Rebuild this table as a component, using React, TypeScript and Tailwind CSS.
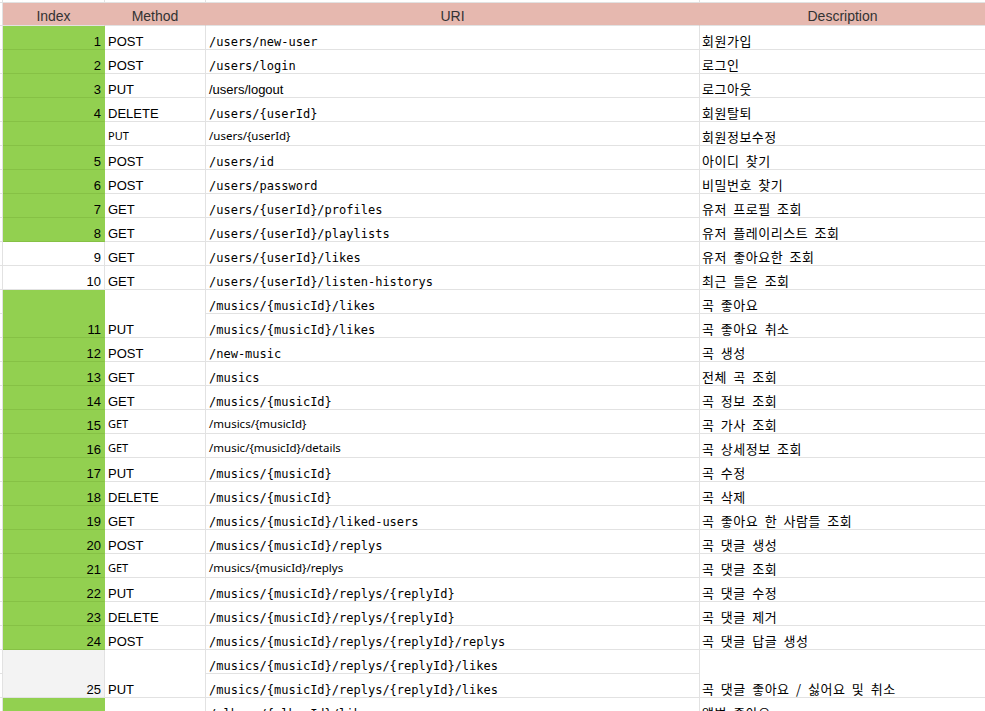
import React from "react";

type Fill = "g" | "w" | "s";
type UF = "mono" | "arial" | "small";
type R = {
  i?: string;
  m?: string;
  ms?: boolean;
  u: string;
  uf?: UF;
  d?: string;
  f: Fill;
  spanIdx?: boolean;
  spanMethod?: boolean;
  spanDesc?: boolean;
  skipIdx?: boolean;
  skipMethod?: boolean;
  skipDesc?: boolean;
};

const rows: R[] = [
  { i: "1", m: "POST", u: "/users/new-user", d: "회원가입", f: "g" },
  { i: "2", m: "POST", u: "/users/login", d: "로그인", f: "g" },
  { i: "3", m: "PUT", u: "/users/logout", uf: "arial", d: "로그아웃", f: "g" },
  { i: "4", m: "DELETE", u: "/users/{userId}", d: "회원탈퇴", f: "g" },
  { m: "PUT", ms: true, u: "/users/{userId}", uf: "small", d: "회원정보수정", f: "g" },
  { i: "5", m: "POST", u: "/users/id", d: "아이디 찾기", f: "g" },
  { i: "6", m: "POST", u: "/users/password", d: "비밀번호 찾기", f: "g" },
  { i: "7", m: "GET", u: "/users/{userId}/profiles", d: "유저 프로필 조회", f: "g" },
  { i: "8", m: "GET", u: "/users/{userId}/playlists", d: "유저 플레이리스트 조회", f: "g" },
  { i: "9", m: "GET", u: "/users/{userId}/likes", d: "유저 좋아요한 조회", f: "w" },
  { i: "10", m: "GET", u: "/users/{userId}/listen-historys", d: "최근 들은 조회", f: "w" },
  { i: "11", m: "PUT", u: "/musics/{musicId}/likes", d: "곡 좋아요", f: "g", spanIdx: true, spanMethod: true },
  { u: "/musics/{musicId}/likes", d: "곡 좋아요 취소", f: "g", skipIdx: true, skipMethod: true },
  { i: "12", m: "POST", u: "/new-music", d: "곡 생성", f: "g" },
  { i: "13", m: "GET", u: "/musics", d: "전체 곡 조회", f: "g" },
  { i: "14", m: "GET", u: "/musics/{musicId}", d: "곡 정보 조회", f: "g" },
  { i: "15", m: "GET", ms: true, u: "/musics/{musicId}", uf: "small", d: "곡 가사 조회", f: "g" },
  { i: "16", m: "GET", ms: true, u: "/music/{musicId}/details", uf: "small", d: "곡 상세정보 조회", f: "g" },
  { i: "17", m: "PUT", u: "/musics/{musicId}", d: "곡 수정", f: "g" },
  { i: "18", m: "DELETE", u: "/musics/{musicId}", d: "곡 삭제", f: "g" },
  { i: "19", m: "GET", u: "/musics/{musicId}/liked-users", d: "곡 좋아요 한 사람들 조회", f: "g" },
  { i: "20", m: "POST", u: "/musics/{musicId}/replys", d: "곡 댓글 생성", f: "g" },
  { i: "21", m: "GET", ms: true, u: "/musics/{musicId}/replys", uf: "small", d: "곡 댓글 조회", f: "g" },
  { i: "22", m: "PUT", u: "/musics/{musicId}/replys/{replyId}", d: "곡 댓글 수정", f: "g" },
  { i: "23", m: "DELETE", u: "/musics/{musicId}/replys/{replyId}", d: "곡 댓글 제거", f: "g" },
  { i: "24", m: "POST", u: "/musics/{musicId}/replys/{replyId}/replys", d: "곡 댓글 답글 생성", f: "g" },
  {
    i: "25",
    m: "PUT",
    u: "/musics/{musicId}/replys/{replyId}/likes",
    d: "곡 댓글 좋아요 / 싫어요 및 취소",
    f: "s",
    spanIdx: true,
    spanMethod: true,
    spanDesc: true,
  },
  { u: "/musics/{musicId}/replys/{replyId}/likes", f: "s", skipIdx: true, skipMethod: true, skipDesc: true },
  { u: "/albums/{albumId}/likes", d: "앨범 좋아요", f: "g" },
  { u: "", d: "", f: "g" },
];

const ARIAL = "font-['Liberation_Sans',Arial,sans-serif] text-[13px]";
const MONO = "font-['DejaVu_Sans_Mono',monospace] text-[12px]";
const SMALL = "font-['Noto_Sans',sans-serif] text-[11px]";
const SMALLU = "font-['Noto_Sans',sans-serif] text-[11.5px]";
const KR = "font-['Noto_Sans_CJK_KR',sans-serif] text-[13px] tracking-[0.5px] [word-spacing:3px]";

const base = "flex items-end leading-[14px] whitespace-nowrap overflow-hidden border-b border-r box-border";
const grid = "border-[#e2e2e2] bg-white";

function idxFill(f: Fill) {
  if (f === "g") return "bg-[#92d050] border-b-[#86c145] border-r-[#92d050]";
  if (f === "s") return "bg-[#f3f3f3] border-b-[#e2e2e2] border-r-[#e2e2e2]";
  return "bg-white border-[#e2e2e2]";
}

export default function App() {
  const cells: React.ReactNode[] = [];
  rows.forEach((r, k) => {
    cells.push(<div key={`s${k}`} className={`col-start-1 ${base} ${grid}`} />);
    if (!r.skipIdx) {
      cells.push(
        <div
          key={`i${k}`}
          className={`col-start-2 ${r.spanIdx ? "row-span-2" : ""} ${base} ${idxFill(r.f)} justify-end pr-[3px] ${ARIAL} text-black`}
        >
          {r.i}
        </div>
      );
    }
    if (!r.skipMethod) {
      cells.push(
        <div
          key={`m${k}`}
          className={`col-start-3 ${r.spanMethod ? "row-span-2" : ""} ${base} ${grid} pl-[3px] ${r.ms ? SMALL + " pb-[2px]" : ARIAL} text-black`}
        >
          {r.m}
        </div>
      );
    }
    const uf = r.uf === "arial" ? ARIAL : r.uf === "small" ? SMALLU + " pb-[2px]" : MONO;
    cells.push(
      <div key={`u${k}`} className={`col-start-4 ${base} ${grid} pl-[3px] ${uf} text-black`}>
        {r.u}
      </div>
    );
    if (!r.skipDesc) {
      cells.push(
        <div
          key={`d${k}`}
          className={`col-start-5 ${r.spanDesc ? "row-span-2" : ""} ${base} ${grid} border-r-0 pl-[2px] pb-[1px] ${KR} text-black`}
        >
          {r.d}
        </div>
      );
    }
  });

  const headCell =
    "flex items-end justify-center pb-[2px] leading-[14px] bg-[#e6b8af] border-b border-r border-b-[#e2e2e2] border-r-[#e6b8af] text-[#333] font-['Liberation_Sans',Arial,sans-serif] text-[14px]";

  return (
    <div className="h-[711px] w-[985px] overflow-hidden bg-white">
      <div className="grid grid-cols-[3px_102px_101px_494px_285px] grid-rows-[3px_23px] auto-rows-[24px]">
        <div className={`col-start-1 border-b border-r ${grid}`} />
        <div className={`col-start-2 border-b border-r ${grid}`} />
        <div className={`col-start-3 border-b border-r ${grid}`} />
        <div className={`col-start-4 border-b border-r ${grid}`} />
        <div className={`col-start-5 border-b ${grid}`} />
        <div className={`col-start-1 border-b border-r ${grid}`} />
        <div className={`col-start-2 ${headCell}`}>Index</div>
        <div className={`col-start-3 ${headCell}`}>Method</div>
        <div className={`col-start-4 ${headCell}`}>URI</div>
        <div className={`col-start-5 ${headCell} border-r-0`}>Description</div>
        {cells}
      </div>
    </div>
  );
}
